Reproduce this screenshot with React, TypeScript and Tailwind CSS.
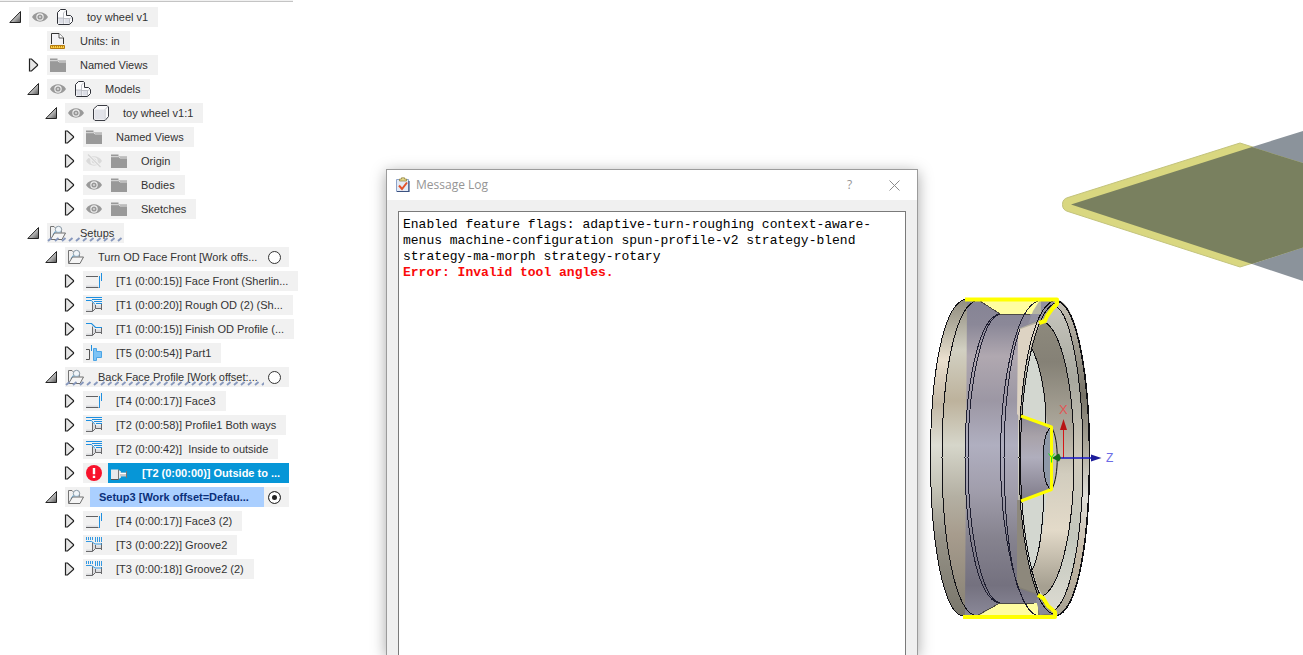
import React, { useState } from 'react';

type IconName =
  | 'eye'
  | 'eyeOff'
  | 'component'
  | 'body'
  | 'units'
  | 'folder'
  | 'setup'
  | 'face'
  | 'rough'
  | 'finish'
  | 'part'
  | 'bore'
  | 'groove'
  | 'error';

interface TreeRow {
  id: string;
  depth: 0 | 1 | 2 | 3;
  state: 'open' | 'closed' | 'leaf';
  icons: IconName[];
  label: string;
  radio?: boolean;
  stale?: boolean;
  highlight?: 'operation' | 'setup';
}

const ROWS: TreeRow[] = [
  { id: 'root', depth: 0, state: 'open', icons: ['eye', 'component'], label: 'toy wheel v1' },
  { id: 'units', depth: 1, state: 'leaf', icons: ['units'], label: 'Units: in' },
  { id: 'views', depth: 1, state: 'closed', icons: ['folder'], label: 'Named Views' },
  { id: 'models', depth: 1, state: 'open', icons: ['eye', 'component'], label: 'Models' },
  { id: 'wheel', depth: 2, state: 'open', icons: ['eye', 'body'], label: 'toy wheel v1:1' },
  { id: 'wheel-views', depth: 3, state: 'closed', icons: ['folder'], label: 'Named Views' },
  { id: 'origin', depth: 3, state: 'closed', icons: ['eyeOff', 'folder'], label: 'Origin' },
  { id: 'bodies', depth: 3, state: 'closed', icons: ['eye', 'folder'], label: 'Bodies' },
  { id: 'sketches', depth: 3, state: 'closed', icons: ['eye', 'folder'], label: 'Sketches' },
  { id: 'setups', depth: 1, state: 'open', icons: ['setup'], label: 'Setups', stale: true },
  { id: 'setup1', depth: 2, state: 'open', icons: ['setup'], label: 'Turn OD Face Front [Work offs...', radio: true },
  { id: 'op1', depth: 3, state: 'closed', icons: ['face'], label: '[T1 (0:00:15)] Face Front (Sherlin...' },
  { id: 'op2', depth: 3, state: 'closed', icons: ['rough'], label: '[T1 (0:00:20)] Rough OD (2) (Sh...' },
  { id: 'op3', depth: 3, state: 'closed', icons: ['finish'], label: '[T1 (0:00:15)] Finish OD Profile (...' },
  { id: 'op4', depth: 3, state: 'closed', icons: ['part'], label: '[T5 (0:00:54)] Part1' },
  { id: 'setup2', depth: 2, state: 'open', icons: ['setup'], label: 'Back Face Profile [Work offset:...', radio: true, stale: true },
  { id: 'op5', depth: 3, state: 'closed', icons: ['face'], label: '[T4 (0:00:17)] Face3' },
  { id: 'op6', depth: 3, state: 'closed', icons: ['rough'], label: '[T2 (0:00:58)] Profile1 Both ways' },
  { id: 'op7', depth: 3, state: 'closed', icons: ['rough'], label: '[T2 (0:00:42)]  Inside to outside' },
  { id: 'op8', depth: 3, state: 'closed', icons: ['error', 'bore'], label: '[T2 (0:00:00)] Outside to ...', highlight: 'operation' },
  { id: 'setup3', depth: 2, state: 'open', icons: ['setup'], label: 'Setup3 [Work offset=Defau...', radio: true, highlight: 'setup' },
  { id: 'op9', depth: 3, state: 'closed', icons: ['face'], label: '[T4 (0:00:17)] Face3 (2)' },
  { id: 'op10', depth: 3, state: 'closed', icons: ['groove'], label: '[T3 (0:00:22)] Groove2' },
  { id: 'op11', depth: 3, state: 'closed', icons: ['groove'], label: '[T3 (0:00:18)] Groove2 (2)' },
];

const INDENT = {
  0: 'pl-[9px]',
  1: 'pl-[27px]',
  2: 'pl-[45px]',
  3: 'pl-[63px]',
};

const Stock: React.FC = () => (
  <g fill="none">
    <path d="M0 12.500h6v2H0zM7 7l2.500 1.500h5.500v3H9.500L7 13z" fill="#dcdde0" />
    <path
      d="M0 14.500h6.500v-9M6.500 14.500l3-3h6M9.500 8v3.500M15.500 6v7"
      stroke="#6a6a6c"
    />
  </g>
);

const Icon: React.FC<{ name: IconName }> = ({ name }) => (
  <svg viewBox="0 0 16 16" className="h-4 w-4 shrink-0" aria-hidden="true">
    {name === 'eye' && (
      <>
        <path d="M0 8C3.500 1.800 12.500 1.800 16 8C12.500 14.200 3.500 14.200 0 8z" fill="#999" />
        <circle cx="8" cy="8" r="3.700" fill="#f1f1f1" />
        <circle cx="8" cy="8" r="2.600" fill="#999" />
        <circle cx="8" cy="8" r="0.900" fill="#e4e4e4" />
      </>
    )}
    {name === 'eyeOff' && (
      <>
        <path d="M0 8C3.500 1.800 12.500 1.800 16 8C12.500 14.200 3.500 14.200 0 8z" fill="#dadada" />
        <circle cx="8" cy="8" r="3.700" fill="#f1f1f1" />
        <circle cx="8" cy="8" r="2.400" fill="#dadada" />
        <path d="M2 2l13 12" stroke="#f1f1f1" strokeWidth="3" />
        <path d="M2 1.500l12.500 12.500" stroke="#d6d6d6" strokeWidth="1.300" />
      </>
    )}
    {name === 'component' && (
      <g strokeLinejoin="round">
        <path
          d="M.5 3.500L3.500.5H8.500L9.500 1.500V6.500H13.500L15.500 8.500V12.500L12.500 15.500H1.500L.5 14.500z"
          fill="#fcfcfd"
        />
        <path d="M1.500 9h4.500v5.500H1.500zM7.500 10h5v4.500h-5z" fill="#dcdee6" />
        <path d="M6.500 4v11M1 9h5.500M6.500 9.500h6L15 8.500M12.500 9.500V15M6.500 4L9 1.500" fill="none" stroke="#b0b2ba" strokeWidth="0.800" />
        <path
          d="M.5 3.500L3.500.5H8.500L9.500 1.500V6.500H13.500L15.500 8.500V12.500L12.500 15.500H1.500L.5 14.500z"
          fill="none"
          stroke="#2f3138"
        />
      </g>
    )}
    {name === 'body' && (
      <g strokeLinejoin="round">
        <path d="M.5 4L4.500.5H14l1.500 1.500v9.500L12 15.500H2L.5 14z" fill="#fbfbfc" stroke="#3c3e45" />
        <path d="M1.500 4.500H11v10H1.500z" fill="#e2e3e9" />
        <path d="M12 4.500V15M12 4.500l3-3" fill="none" stroke="#b0b2ba" strokeWidth="0.800" />
      </g>
    )}
    {name === 'units' && (
      <>
        <path d="M1.500 11V.5H9L13.500 5V11" fill="#f3f3f6" stroke="#333" />
        <path d="M9 .5V5h4.500" fill="#fff" stroke="#333" strokeWidth="0.800" />
        <path d="M.5 12.500h14v3H.5z" fill="#ffd447" stroke="#b47a10" />
        <path d="M2.500 13v1.500M4.500 13v1.500M6.500 13v1.500M8.500 13v1.500M10.500 13v1.500M12.500 13v1.500" stroke="#a86c0a" strokeWidth="0.800" />
      </>
    )}
    {name === 'folder' && (
      <>
        <path d="M0 1.500h7.500v2H16V15H0z" fill="#999" />
        <path d="M0 3.700h7.500L9 5h7" fill="none" stroke="#e0e0e0" />
      </>
    )}
    {name === 'setup' && (
      <g fill="none" strokeLinejoin="round">
        <path d="M.5 14V1.500h3.500l1.500 1.500M11.500 3.500v4" stroke="#747474" />
        <circle cx="8.500" cy="4.500" r="3.200" fill="#f1f6fa" stroke="#8a99a5" />
        <path d="M6.500 6.500h4v1.500h-4z" fill="#bfe0f7" />
        <path d="M5.500 6.500L3 10" stroke="#5aa9de" strokeWidth="1.200" />
        <path d="M4.500 8h11L12 14.500H.5z" fill="#f5f5f5" stroke="#6f6f6f" />
      </g>
    )}
    {name === 'face' && (
      <g fill="none">
        <path d="M0 12.500h12v1.500H0z" fill="#dcdde0" />
        <path d="M0 3.500h12M0 14.500h12.500" stroke="#626264" />
        <path d="M13.500 3v12M15.500 0v8" stroke="#1e8fe0" />
      </g>
    )}
    {name === 'rough' && (
      <>
        <Stock />
        <path
          d="M0 .5h16M0 3.500h5.500L9 7.500M6 2.500h10M8 4.500h8M10 6.500h6"
          fill="none"
          stroke="#1e8fe0"
        />
      </>
    )}
    {name === 'finish' && (
      <>
        <Stock />
        <path d="M0 2.500h5.500l4 4h6.500" fill="none" stroke="#1e8fe0" strokeWidth="1.200" />
      </>
    )}
    {name === 'part' && (
      <g fill="none">
        <path d="M0 4.500h3.500v10H0" stroke="#555" />
        <path d="M5.500 0v6" stroke="#1e8fe0" />
        <path d="M7.500 3.500h3v3h5v6h-5v3h-3z" fill="#7dc3f5" stroke="#4ba5e6" />
      </g>
    )}
    {name === 'bore' && (
      <>
        <path d="M0 4.500h7l3 2v6l-3 2H0z" fill="#e9e9eb" />
        <path d="M9 7.500h7v4H9z" fill="#c8cacd" />
        <path d="M7.500 4.500v10M15.500 6v7" stroke="#777" />
        <path d="M9 8.500h6" stroke="#fff" />
        <path d="M0 14.500h7.500" stroke="#555" />
      </>
    )}
    {name === 'groove' && (
      <>
        <Stock />
        <path
          d="M.5 0v3M2.500 0v3M4.500 0v3M6.500 0v3M9.500 0v5M11.500 0v5M13.500 0v5M15.500 0v5M0 4.500h5.500l3.500 2.500h7"
          fill="none"
          stroke="#1e8fe0"
          strokeWidth="0.900"
        />
      </>
    )}
    {name === 'error' && (
      <>
        <circle cx="8" cy="8" r="8" fill="#f8122c" />
        <path d="M6.800 3h2.400v6.300H6.800zM6.800 10.700h2.400V13H6.800z" fill="#fff" />
      </>
    )}
  </svg>
);

const Arrow: React.FC<{ open: boolean }> = ({ open }) => (
  <svg viewBox="0 0 13 14" className="h-3.5 w-[13px]" aria-hidden="true">
    <defs>
      <linearGradient id="arrowFill" x1="0" y1="0" x2="1" y2="1">
        <stop offset="0.3" stopColor="#eee" />
        <stop offset="1" stopColor="#555" />
      </linearGradient>
    </defs>
    {open ? (
      <path d="M11.500 1.500V12.500H.8z" fill="url(#arrowFill)" stroke="#222" />
    ) : (
      <path d="M2.500 1v12h2L10.500 7.500v-1L4.500 1z" fill="#e6e6e6" stroke="#222" strokeWidth="1.200" />
    )}
  </svg>
);

const StaleMark: React.FC = () => (
  <svg className="absolute bottom-px left-0 h-[5px] w-full" aria-hidden="true">
    <defs>
      <pattern id="staleStripes" width="7" height="5" patternUnits="userSpaceOnUse">
        <path d="M1 4L4.500 1" stroke="#8798bd" strokeWidth="2" />
      </pattern>
    </defs>
    <rect width="100%" height="5" fill="url(#staleStripes)" />
  </svg>
);

const Row: React.FC<{
  row: TreeRow;
  active: string;
  onActivate: (id: string) => void;
}> = ({ row, active, onActivate }) => (
  <li className={`flex h-6 items-center whitespace-pre ${INDENT[row.depth]}`}>
    <span className="flex w-5 shrink-0 items-center">
      {row.state !== 'leaf' && (
        <button type="button" aria-label={row.label} aria-expanded={row.state === 'open'}>
          <Arrow open={row.state === 'open'} />
        </button>
      )}
    </span>
    <div className="flex h-5 items-center bg-[#f1f1f1]">
      {row.highlight === 'operation' ? (
        <>
          <span className="px-[3px]">
            <Icon name={row.icons[0]} />
          </span>
          <span className="ml-[3px] flex h-5 items-center gap-[15px] bg-[#0696d7] pr-[9px] pl-[3px] font-bold text-white">
            <Icon name={row.icons[1]} />
            {row.label}
          </span>
        </>
      ) : row.highlight === 'setup' ? (
        <>
          <span className="pr-1.5 pl-[3px]">
            <Icon name={row.icons[0]} />
          </span>
          <span className="flex h-5 w-[174px] items-center bg-[#aacfff] px-[9px] font-bold text-[#0a2f7a]">
            {row.label}
          </span>
        </>
      ) : (
        <span
          className={`relative flex h-5 items-center pl-[3px] ${row.radio ? 'w-[199px]' : 'pr-2.5'}`}
        >
          <span className="flex gap-[9px] pr-3.5">
            {row.icons.map((name) => (
              <Icon key={name} name={name} />
            ))}
          </span>
          {row.label}
          {row.stale && <StaleMark />}
        </span>
      )}
      {row.radio && (
        <input
          type="radio"
          name="activeSetup"
          aria-label={row.label}
          checked={active === row.id}
          onChange={() => onActivate(row.id)}
          className="mr-2 ml-1 h-[13px] w-[13px] shrink-0 appearance-none rounded-full border border-[#333] bg-white checked:bg-[#222] checked:shadow-[inset_0_0_0_3px_white]"
        />
      )}
    </div>
  </li>
);

const Browser: React.FC = () => {
  const [active, setActive] = useState('setup3');
  return (
    <aside className="w-[293px] shrink-0 font-['Liberation_Sans',Arial,sans-serif] text-[11px] leading-4 text-[#333]">
      <div className="h-0.5 border-b border-[#c4c4c4] bg-[#f1f1f1]" />
      <ul className="pt-[3px]">
        {ROWS.map((row) => (
          <Row key={row.id} row={row} active={active} onActivate={setActive} />
        ))}
      </ul>
    </aside>
  );
};

const MessageLog: React.FC = () => (
  <section
    role="dialog"
    aria-labelledby="logTitle"
    className="flex w-[532px] flex-1 flex-col border border-b-0 border-[#9b9b9b] bg-[#f0f0f0] shadow-[0_3px_14px_rgba(0,0,0,0.35)]"
  >
    <header className="flex h-[30px] items-center bg-white pl-2 font-['Open_Sans','Noto_Sans',sans-serif] text-xs text-[#959595]">
      <svg viewBox="0 0 16 16" className="mr-[5px] h-4 w-4" aria-hidden="true">
        <path d="M1.500 2.500h12v12H1.500z" fill="#e3eaf6" stroke="#8da3c8" />
        <path d="M2 14.500h12V4" fill="none" stroke="#3b5280" strokeWidth="1.200" />
        <path d="M4.500 4V2h2V.8h3V2h2v2z" fill="#e3d78a" stroke="#8d7d38" strokeWidth="0.700" />
        <path d="M4 8.500l3 3.500 5-6.500" fill="none" stroke="#e2512a" strokeWidth="2" />
      </svg>
      <h1 id="logTitle" className="flex-1">
        Message Log
      </h1>
      <button type="button" aria-label="Help" className="w-[45px]">
        ?
      </button>
      <button type="button" aria-label="Close" className="flex w-[45px] justify-center">
        <svg viewBox="0 0 11 11" className="h-[11px] w-[11px]">
          <path d="M.5.5l10 10M10.500.5l-10 10" stroke="#8c8c8c" strokeWidth="1" />
        </svg>
      </button>
    </header>
    <div
      role="log"
      className="mx-[11px] mt-[11px] flex-1 border border-b-0 border-[#7a7a7a] bg-white px-1 py-[5px] font-['Liberation_Mono','Courier_New',monospace] text-[13px] leading-4 text-black"
    >
      <p>
        Enabled feature flags: adaptive-turn-roughing context-aware-menus machine-configuration
        spun-profile-v2 strategy-blend strategy-ma-morph strategy-rotary
      </p>
      <p className="font-bold text-[#fa0a0a]">Error: Invalid tool angles.</p>
    </div>
  </section>
);

const Viewport: React.FC = () => (
  <svg
    viewBox="918 0 385 655"
    className="h-[655px] w-[385px] shrink-0"
    role="img"
    aria-label="Wheel model with tool"
  >
    <defs>
      <linearGradient id="rim" gradientUnits="userSpaceOnUse" x1="0" y1="299" x2="0" y2="617">
        <stop offset="0" stopColor="#8f8b7e" />
        <stop offset="0.1" stopColor="#bab6a6" />
        <stop offset="0.19" stopColor="#eadfce" />
        <stop offset="0.33" stopColor="#c3b8a5" />
        <stop offset="0.46" stopColor="#deded5" />
        <stop offset="0.6" stopColor="#c3c2b5" />
        <stop offset="0.75" stopColor="#969287" />
        <stop offset="1" stopColor="#79766b" />
      </linearGradient>
      <linearGradient id="rimStep" gradientUnits="userSpaceOnUse" x1="0" y1="299" x2="0" y2="617">
        <stop offset="0" stopColor="#8f8b7e" />
        <stop offset="0.16" stopColor="#d2d0c2" />
        <stop offset="0.32" stopColor="#bdb29c" />
        <stop offset="0.46" stopColor="#d6d6ca" />
        <stop offset="0.62" stopColor="#b4b0a3" />
        <stop offset="0.74" stopColor="#a79c8d" />
        <stop offset="1" stopColor="#858074" />
      </linearGradient>
      <linearGradient id="cut" gradientUnits="userSpaceOnUse" x1="0" y1="299" x2="0" y2="617">
        <stop offset="0" stopColor="#858394" />
        <stop offset="0.08" stopColor="#8b8898" />
        <stop offset="0.18" stopColor="#b0a8b0" />
        <stop offset="0.32" stopColor="#9c97a4" />
        <stop offset="0.46" stopColor="#b0afc0" />
        <stop offset="0.6" stopColor="#a19eac" />
        <stop offset="0.75" stopColor="#86838f" />
        <stop offset="0.9" stopColor="#74717f" />
        <stop offset="1" stopColor="#8b8999" />
      </linearGradient>
      <linearGradient id="bore" gradientUnits="userSpaceOnUse" x1="0" y1="320" x2="0" y2="600">
        <stop offset="0" stopColor="#8e8a7d" />
        <stop offset="0.15" stopColor="#858176" />
        <stop offset="0.4" stopColor="#b0ab9e" />
        <stop offset="0.55" stopColor="#d2cdbe" />
        <stop offset="0.75" stopColor="#e3dac9" />
        <stop offset="0.95" stopColor="#a6a091" />
      </linearGradient>
      <linearGradient id="lip" gradientUnits="userSpaceOnUse" x1="0" y1="300" x2="0" y2="617">
        <stop offset="0" stopColor="#c9c8c0" />
        <stop offset="0.25" stopColor="#a8a89f" />
        <stop offset="0.5" stopColor="#d0cabb" />
        <stop offset="0.75" stopColor="#c3c7bd" />
        <stop offset="1" stopColor="#dedcd3" />
      </linearGradient>
      <linearGradient id="edge" gradientUnits="userSpaceOnUse" x1="0" y1="300" x2="0" y2="617">
        <stop offset="0" stopColor="#c7c2b6" />
        <stop offset="0.3" stopColor="#767267" />
        <stop offset="0.5" stopColor="#b8b4a7" />
        <stop offset="0.62" stopColor="#e0dfda" />
        <stop offset="0.8" stopColor="#c5b9a6" />
        <stop offset="1" stopColor="#a7a294" />
      </linearGradient>
      <linearGradient id="hub" gradientUnits="userSpaceOnUse" x1="0" y1="415" x2="0" y2="500">
        <stop offset="0" stopColor="#8d8994" />
        <stop offset="0.25" stopColor="#a8a2a9" />
        <stop offset="0.5" stopColor="#b0aebd" />
        <stop offset="1" stopColor="#7f7b89" />
      </linearGradient>
    </defs>

    {/* Tool insert and holder */}
    <path d="M1068 197.500L1240 143L1303 163V247.500L1240 267L1068 211.500A7.200 7.200 0 0 1 1068 197.500z" fill="#d9d780" stroke="#c3c37c" />
    <path d="M1252 147L1303 131V163zM1252 264L1303 281V247.500z" fill="#8b939b" />
    <path d="M1071 204.500L1252 147L1303 163V247.500L1252 264z" fill="#79805f" />

    {/* Outer shell */}
    <path d="M967 299C943 301 930.500 375 930.500 458C930.500 540 943 614 963 616H1056C1078 612 1090 540 1090 458C1090 375 1078 305 1058 300z" fill="url(#rim)" />
    <path d="M979 300C955 302 942 375 942 458C942 540 955 614 977 616H1000V300z" fill="url(#rimStep)" />
    <path d="M1056 300C1078 306 1090 375 1090 458C1090 540 1078 610 1056 616C1036 606 1019 550 1019 458C1019 375 1035 305 1056 300z" fill="url(#edge)" />
    <path d="M1054 305C1071 312 1083 380 1083 458C1083 540 1070 602 1053 611C1036 602 1020 550 1020 458C1020 375 1036 312 1054 305z" fill="url(#lip)" />
    <path d="M1043 321C1063 330 1074 390 1074 458C1074 525 1062 585 1043 596C1031 580 1020 520 1020 458C1020 400 1030 335 1043 321z" fill="url(#bore)" />
    <path d="M1031 347C1042 367 1048 415 1048 458C1048 502 1042 552 1031 572C1024 545 1020 500 1020 458C1020 415 1024 375 1031 347z" fill="#d3d7d0" />

    {/* Section overlay */}
    <path d="M967 301H980L1000 314H1033L1041 301H1055L1045 318L1018 329V588L1038 595L1053 614H1040L1036 603H1000L978 615H965z" fill="url(#cut)" />
    <path d="M1018 330L1040 322C1030 340 1021 390 1020 417L1017 414z" fill="#ddd3c3" />
    <path d="M1017 500L1020 500C1022 540 1029 578 1038 594L1017 586z" fill="#8d887c" />
    <path d="M980 301H1041V314H1000z" fill="#fffda0" />
    <path d="M978 616L1000 603H1038V616z" fill="#fffda0" />
    <path d="M1040 300L1054 301L1044 318L1028 324L1033 311z" fill="#9795a5" opacity="0.7" />
    <path d="M1036 600L1042 598L1054 612L1040 615z" fill="#8a8999" />

    {/* Hub */}
    <path d="M1020 416L1051 427V490L1020 500z" fill="url(#hub)" />
    <path d="M1050 428C1041 437 1041 480 1050 489z" fill="#8e98a8" />
    <path d="M1052 428C1059 440 1059 476 1052 489" fill="#c3bfb2" stroke="#111" />

    {/* Silhouette edges */}
    <g fill="none" stroke="#101014" strokeWidth="1" shapeRendering="crispEdges">
      <path d="M967 299C943 301 930.500 375 930.500 458C930.500 540 943 614 963 616" />
      <path d="M979 300C955 302 942 375 942 458C942 540 955 614 977 616" />
      <path d="M1000 314C979 316 965 385 965 458C965 530 977 601 1000 603" stroke="#1d1d30" />
      <path d="M1000 314C982 318 968 385 968 458C968 530 981 599 1000 603" stroke="#1d1d30" />
      <path d="M1000 314H1030M1000 603H1034" stroke="#4d4b45" />
      <path d="M1041 300C1015 304 1000.500 385 1000.500 458C1000.500 535 1018 612 1038 616" stroke="#1d1d30" />
      <path d="M1020 329C1009 360 1004 410 1004 458C1004 510 1009 560 1018 588" stroke="#1d1d30" />
      <path d="M980 301L1000 314M978 615L1000 603" stroke="#4d4b45" />
      <path d="M1053 301C1031 310 1019 385 1019 458C1019 535 1033 608 1053 614" />
      <path d="M1055 303C1034 312 1020.500 385 1020.500 458C1020.500 535 1034 604 1054 612" />
      <path d="M1043 321C1063 330 1074 390 1074 458C1074 525 1062 585 1043 596" />
      <path d="M1055 306C1071 312 1083 380 1083 458C1083 540 1070 602 1053 611" />
      <path d="M1058 301C1077 307 1089.500 375 1089.500 458C1089.500 540 1078 611 1056 616" strokeWidth="1.600" />
      <path d="M1031 347C1042 367 1046 400 1046 424M1044 494C1042 540 1038 560 1031 572" />
      <path d="M1050 428C1041 437 1041 480 1050 489" />
    </g>

    {/* Selected profile */}
    <g fill="none" stroke="#ffff00" strokeLinejoin="round">
      <path d="M965 299.500H1057V304L1052 309L1047 316L1045 321L1039 323" strokeWidth="4" />
      <path d="M963 617H1055V612L1048 606L1043 598L1038 595" strokeWidth="4" />
      <path d="M1021 416L1051.500 427V489.500L1021 501" strokeWidth="3" />
    </g>

    {/* Axis triad */}
    <path d="M1063.500 458V428" stroke="#d41616" />
    <path d="M1063.500 419L1060 430H1067z" fill="#b81414" />
    <path d="M1060 458H1093" stroke="#1515c8" strokeWidth="1.500" />
    <path d="M1101.500 458L1091 454.500V461.500z" fill="#1c1c9a" />
    <path d="M1048.500 453.500l3 4v5M1054.500 453.500l-3 4" fill="none" stroke="#19e619" />
    <path d="M1052 458L1059 453.500L1061 458L1059 461.500z" fill="#146b1c" />
    <text x="1059" y="414" fill="#e25555" fontSize="13" fontFamily="Liberation Sans, Arial, sans-serif">X</text>
    <text x="1106" y="462" fill="#6b6be6" fontSize="12" fontFamily="Liberation Sans, Arial, sans-serif">Z</text>
  </svg>
);

export default function App() {
  return (
    <div className="flex h-screen min-h-[400px] overflow-hidden bg-white">
      <Browser />
      <main className="flex min-w-0 flex-1 justify-between">
        <div className="flex shrink-0 flex-col pt-[169px] pl-[93px]">
          <MessageLog />
        </div>
        <Viewport />
      </main>
    </div>
  );
}
